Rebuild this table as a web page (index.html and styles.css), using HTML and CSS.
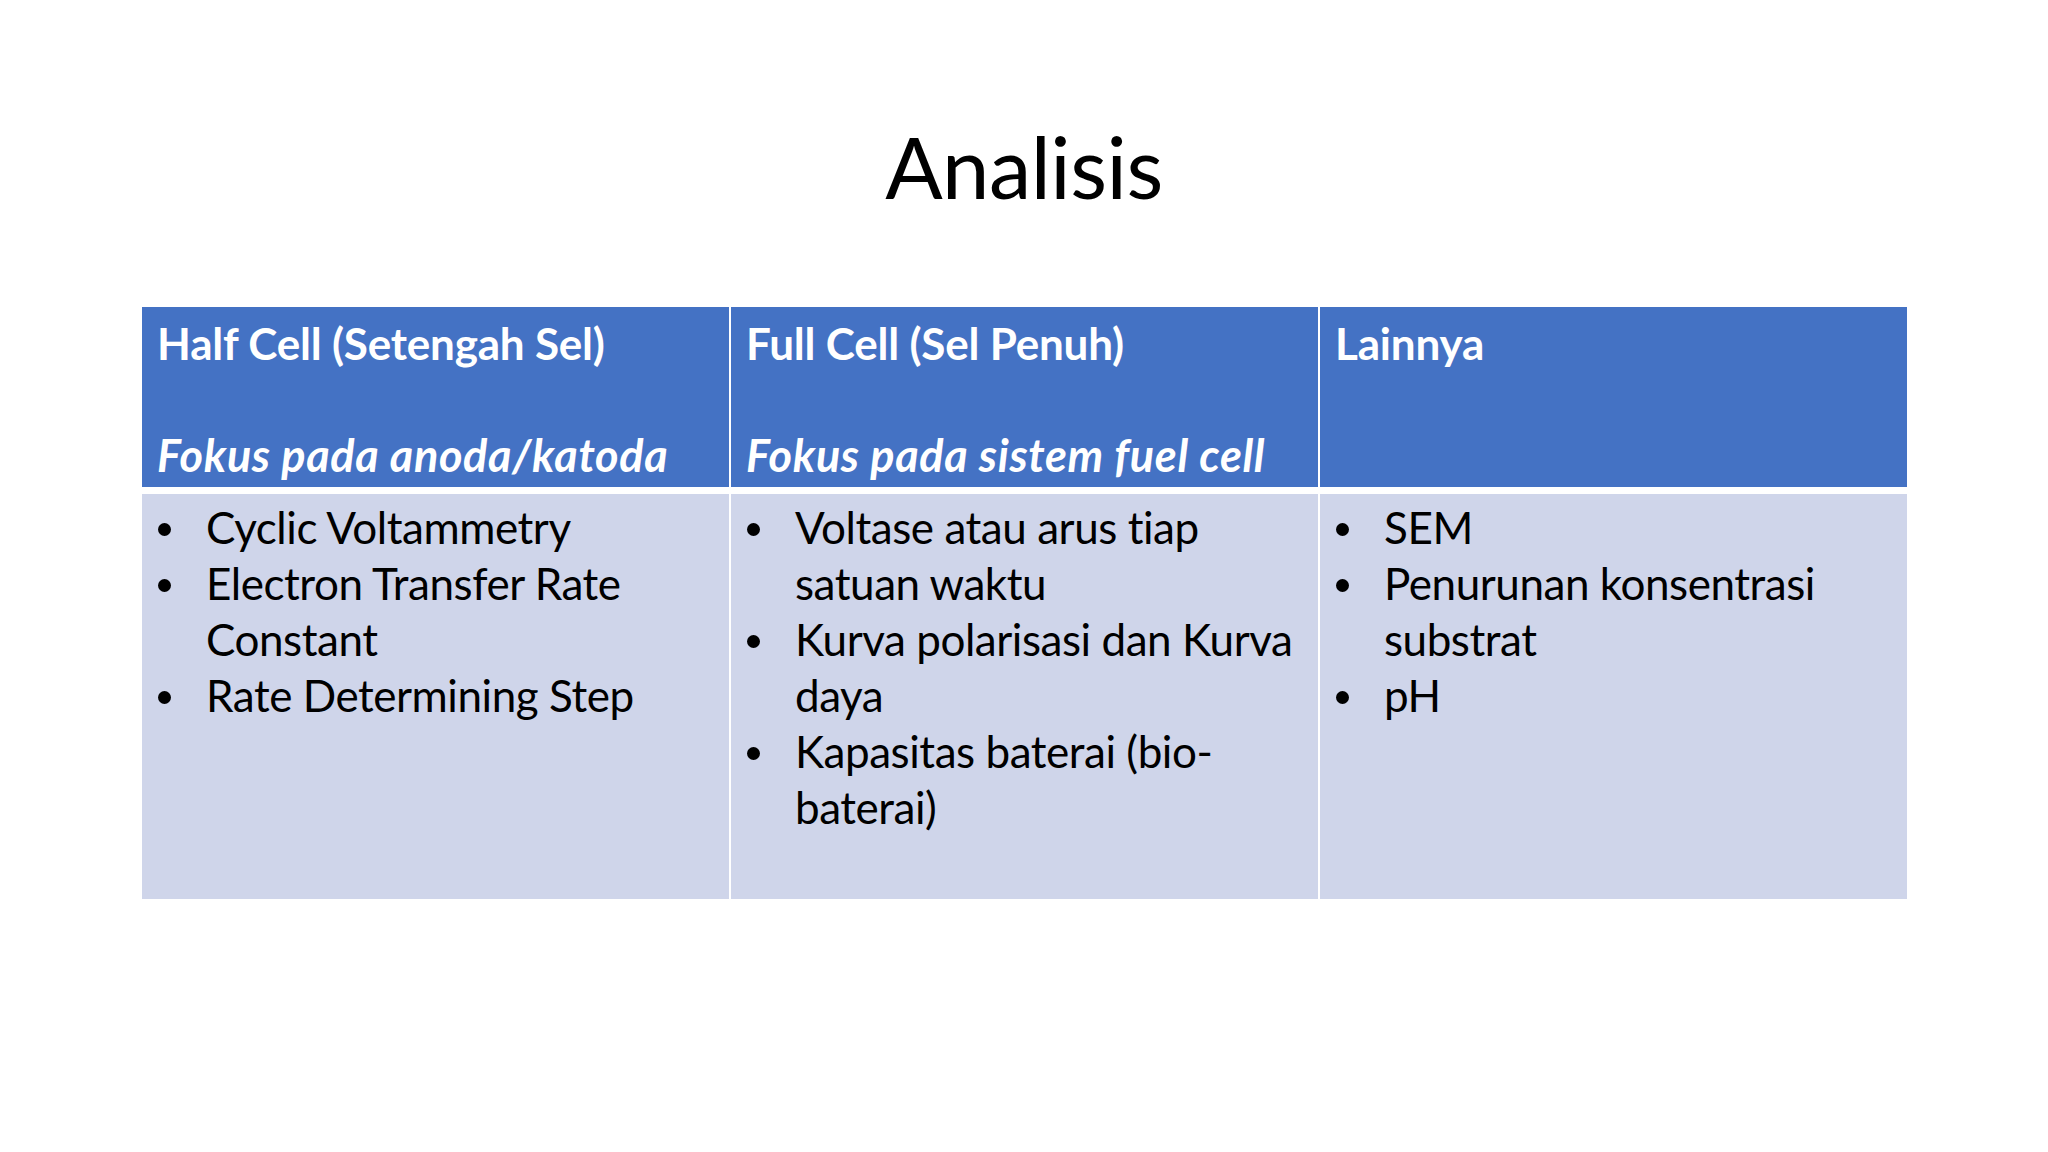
FILE: index.html
```html
<!DOCTYPE html>
<html lang="id">
<head>
<meta charset="utf-8">
<title>Analisis</title>
<link rel="stylesheet" href="styles.css">
</head>
<body>
<div class="slide">
  <h1 class="title">Analisis</h1>
  <div class="table">
    <div class="hcell">
      <div class="hline">Half Cell (Setengah Sel)</div>
      <div class="hline blank">&nbsp;</div>
      <div class="hline sub">Fokus pada anoda/katoda</div>
    </div>
    <div class="hcell">
      <div class="hline">Full Cell (Sel Penuh)</div>
      <div class="hline blank">&nbsp;</div>
      <div class="hline sub">Fokus pada sistem fuel cell</div>
    </div>
    <div class="hcell">
      <div class="hline">Lainnya</div>
    </div>

    <div class="bcell">
      <ul class="list">
        <li><span class="dot"></span><span class="txt">Cyclic Voltammetry</span></li>
        <li><span class="dot"></span><span class="txt">Electron Transfer Rate<br>Constant</span></li>
        <li><span class="dot"></span><span class="txt">Rate Determining Step</span></li>
      </ul>
    </div>
    <div class="bcell">
      <ul class="list">
        <li><span class="dot"></span><span class="txt">Voltase atau arus tiap<br>satuan waktu</span></li>
        <li><span class="dot"></span><span class="txt">Kurva polarisasi dan Kurva<br>daya</span></li>
        <li><span class="dot"></span><span class="txt">Kapasitas baterai (bio-<br>baterai)</span></li>
      </ul>
    </div>
    <div class="bcell">
      <ul class="list">
        <li><span class="dot"></span><span class="txt">SEM</span></li>
        <li><span class="dot"></span><span class="txt">Penurunan konsentrasi<br>substrat</span></li>
        <li><span class="dot"></span><span class="txt">pH</span></li>
      </ul>
    </div>
  </div>
</div>
</body>
</html>
```

FILE: styles.css
```css
html, body {
  margin: 0;
  padding: 0;
  background: #ffffff;
}

.slide {
  width: 2048px;
  height: 1152px;
  background: #ffffff;
  overflow: hidden;
  font-family: Lato, "Open Sans", "Liberation Sans", sans-serif;
  color: #000000;
}

.title {
  margin: 0;
  padding-top: 116px;
  font-size: 85px;
  line-height: 100px;
  font-weight: 400;
  letter-spacing: -0.5px;
  text-align: center;
  color: #000000;
}

.table {
  margin: 91px 0 0 142px;
  display: grid;
  grid-template-columns: 587px 587px 587px;
  grid-template-rows: 180px 405px;
  column-gap: 2px;
  row-gap: 7px;
  background: #ffffff;
  width: 1765px;
}

.hcell {
  background: #4472c4;
  color: #ffffff;
  padding: 8px 15px 0 15px;
  font-size: 44px;
  line-height: 56px;
  font-weight: 700;
  letter-spacing: -0.2px;
}

.hline {
  white-space: nowrap;
}

.sub {
  font-style: italic;
  font-size: 45px;
  letter-spacing: 0.65px;
}

.bcell {
  background: #cfd5ea;
  padding: 5px 15px 0 15px;
  font-size: 44px;
  line-height: 56px;
  letter-spacing: -0.45px;
}

.list {
  list-style: none;
  margin: 0;
  padding: 0;
}

.list li {
  display: flex;
  align-items: flex-start;
}

.dot {
  flex: none;
  width: 13px;
  height: 13px;
  border-radius: 50%;
  background: #000000;
  margin: 24px 35px 0 1px;
}

.txt {
  white-space: nowrap;
}
```
